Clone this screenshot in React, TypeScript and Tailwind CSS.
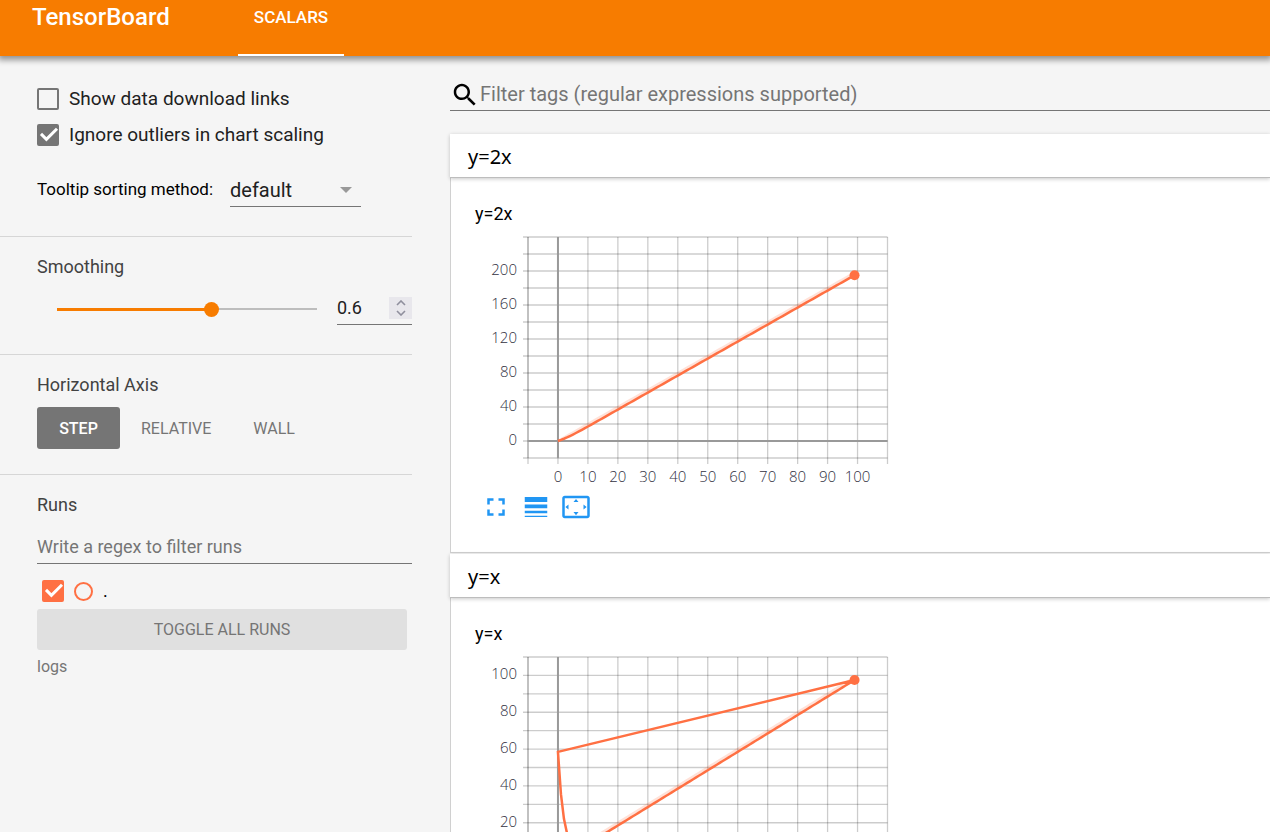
import { useState } from 'react';
import type { ReactNode } from 'react';

type Point = { x: number; y: number };

const SMOOTHING = 0.6;

function ramp(factor: number): Point[] {
  return Array.from({ length: 100 }, (_, i) => ({ x: i, y: i * factor }));
}

// Debiased exponential moving average.
function smooth(points: Point[], weight: number): Point[] {
  let last = 0;
  return points.map((p, i) => {
    last = last * weight + (1 - weight) * p.y;
    return { x: p.x, y: last / (1 - Math.pow(weight, i + 1)) };
  });
}

type ChartProps = {
  label: string;
  points: Point[];
  top: number;
  min: number;
  step: number;
};

const LEFT = 53;
const RIGHT = 412.5;
const GRID_TOP = 11;
const GRID_BOTTOM = 232;

function Chart({ label, points, top, min, step }: ChartProps) {
  const sx = (x: number) => LEFT + ((x + 10) / 120) * (RIGHT - LEFT);
  const sy = (y: number) => GRID_BOTTOM - ((y - min) / (top - min)) * (GRID_BOTTOM - GRID_TOP);
  const path = (list: Point[]) =>
    list.map((p, i) => `${i ? 'L' : 'M'}${sx(p.x).toFixed(2)} ${sy(p.y).toFixed(2)}`).join('');
  const smoothed = smooth(points, SMOOTHING);
  const end = smoothed[99];
  const xs = Array.from({ length: 13 }, (_, i) => -10 + i * 10);
  const ys: number[] = [];
  for (let v = Math.ceil(min / step) * step; v <= top; v += step) ys.push(v);

  return (
    <svg width="425" height="262" role="img" aria-label={label} className="block max-w-full">
      <g stroke="#000" strokeOpacity="0.2" strokeWidth="1.3">
        {xs.map((x) => (
          <line key={x} x1={sx(x)} x2={sx(x)} y1={GRID_TOP} y2={GRID_BOTTOM + 6} />
        ))}
        {ys.map((y) => (
          <line key={y} x1={LEFT - 5} x2={RIGHT} y1={sy(y)} y2={sy(y)} />
        ))}
        <line x1={LEFT} x2={LEFT} y1={GRID_TOP} y2={GRID_BOTTOM} />
      </g>
      <g stroke="#999" strokeWidth="2">
        <line x1={sx(0)} x2={sx(0)} y1={GRID_TOP} y2={GRID_BOTTOM} />
        <line x1={LEFT} x2={RIGHT} y1={sy(0)} y2={sy(0)} />
      </g>
      <path d={path(points)} fill="none" stroke="#ff7043" strokeOpacity="0.2" strokeWidth="2.5" />
      <path d={path(smoothed)} fill="none" stroke="#ff7043" strokeWidth="2.5" />
      <circle cx={sx(end.x)} cy={sy(end.y)} r="5" fill="#ff7043" />
      <g className="fill-[#32313f] font-['Open_Sans',sans-serif] text-[15px] font-light">
        {ys
          .filter((y) => y >= 0 && y % (step * 2) === 0 && y < top)
          .map((y) => (
            <text key={y} x={42} y={sy(y) + 4} textAnchor="end">
              {y}
            </text>
          ))}
        {xs.slice(1, 12).map((x) => (
          <text key={x} x={sx(x)} y={256} textAnchor="middle">
            {x}
          </text>
        ))}
      </g>
    </svg>
  );
}

const ICONS = {
  search:
    'M15.5 14h-.79l-.28-.27C15.41 12.59 16 11.11 16 9.5 16 5.91 13.09 3 9.5 3S3 5.91 3 9.5 5.91 16 9.5 16c1.61 0 3.09-.59 4.23-1.57l.27.28v.79l5 4.99L20.49 19l-4.99-5zm-6 0C7.01 14 5 11.99 5 9.5S7.01 5 9.5 5 14 7.01 14 9.5 11.99 14 9.5 14z',
  fullscreen:
    'M7 14H5v5h5v-2H7v-3zm-2-4h2V7h3V5H5v5zm12 7h-3v2h5v-5h-2v3zM14 5v2h3v3h2V5h-5z',
  lineWeight: 'M3 17h18v-2H3v2zm0 3h18v-1H3v1zm0-7h18v-3H3v3zm0-9v4h18V4H3z',
  fit: 'M12.01 5.5L10 8h4l-1.99-2.5zM18 10v4l2.5-1.99L18 10zM6 10l-2.5 2.01L6 14v-4zm8 6h-4l2.01 2.5L14 16zm7-13H3c-1.1 0-2 .9-2 2v14c0 1.1.9 2 2 2h18c1.1 0 2-.9 2-2V5c0-1.1-.9-2-2-2zm0 16.01H3V4.99h18v14.02z',
};

function Icon({ name }: { name: keyof typeof ICONS }) {
  return (
    <svg viewBox="0 0 24 24" className="size-[30px] shrink-0 fill-current" aria-hidden="true">
      <path d={ICONS[name]} />
    </svg>
  );
}

type CheckProps = { orange?: boolean; defaultChecked?: boolean; children: ReactNode };

function Check({ orange, defaultChecked, children }: CheckProps) {
  return (
    <label className="flex items-center gap-[10px]">
      <span className="grid size-[22px] shrink-0">
        <input
          type="checkbox"
          defaultChecked={defaultChecked}
          className={`peer col-start-1 row-start-1 size-[22px] appearance-none rounded-[2px] border-2 ${
            orange
              ? 'border-[#ff7043] checked:bg-[#ff7043]'
              : 'border-[#757575] checked:bg-[#757575]'
          }`}
        />
        <svg
          viewBox="0 0 22 22"
          className="pointer-events-none invisible col-start-1 row-start-1 size-[22px] peer-checked:visible"
          aria-hidden="true"
        >
          <path d="M4 9.9l5.4 5.4L20 4.7" fill="none" stroke="#fff" strokeWidth="3" />
        </svg>
      </span>
      {children}
    </label>
  );
}

function Panel({ title, children }: { title: string; children: ReactNode }) {
  return (
    <section>
      <button
        type="button"
        className="relative flex h-11 w-full items-center border-b border-[#bdbdbd] bg-white pt-0.5 pl-[18px] text-left font-['Noto_Sans',sans-serif] text-[20px] leading-6 text-black shadow-[0_1px_4px_rgba(0,0,0,0.22)]"
      >
        {title}
      </button>
      <div className="border-b border-l border-[#d0d0d0] bg-white pt-6 pb-[30px] pl-6">
        <h3 className="text-[18px] leading-6 text-black">{title}</h3>
        {children}
        <div className="mt-1 ml-[6px] flex gap-[10px] text-[#2196f3]">
          <button type="button" aria-label="Toggle chart size">
            <Icon name="fullscreen" />
          </button>
          <button type="button" aria-label="Toggle y-axis log scale">
            <Icon name="lineWeight" />
          </button>
          <button type="button" aria-label="Fit domain to data">
            <Icon name="fit" />
          </button>
        </div>
      </div>
    </section>
  );
}

const AXES = ['STEP', 'RELATIVE', 'WALL'];

export default function App() {
  const [axis, setAxis] = useState('STEP');
  return (
    <div className="flex h-screen flex-col bg-[#f5f5f5] font-[Roboto,sans-serif] text-[#212121]">
      <header className="relative z-10 flex h-14 shrink-0 bg-[#f77c00] text-white shadow-[0_2px_6px_2px_rgba(0,0,0,0.4)]">
        <h1 className="w-[238px] pl-8 text-[24px] leading-[34px] font-medium">TensorBoard</h1>
        <a
          href="#scalars"
          className="w-[106px] border-b-2 border-white text-center text-[17px] leading-[34px] font-medium"
        >
          SCALARS
        </a>
      </header>

      <div className="flex min-h-0 flex-1">
        <aside className="w-[412px] shrink-0 text-[18px]">
          <div className="border-b border-[#d6d6d6] pt-[25px] pb-[29px] pl-[37px]">
            <div className="flex h-9 items-center text-[19px]">
              <Check>Show data download links</Check>
            </div>
            <div className="flex h-9 items-center text-[19px]">
              <Check defaultChecked>Ignore outliers in chart scaling</Check>
            </div>
            <div className="mt-5 flex h-[34px] items-center">
              <label htmlFor="sorting" className="w-[193px] text-[17px] text-black">
                Tooltip sorting method:
              </label>
              <div className="grid h-full w-[131px] border-b border-[#757575]">
                <select
                  id="sorting"
                  className="col-start-1 row-start-1 appearance-none bg-transparent text-[20px]"
                >
                  <option>default</option>
                  <option>ascending</option>
                  <option>descending</option>
                  <option>nearest</option>
                </select>
                <svg
                  viewBox="0 0 12 6"
                  className="pointer-events-none col-start-1 row-start-1 mr-[9px] h-[6px] w-3 self-center justify-self-end fill-[#999]"
                  aria-hidden="true"
                >
                  <path d="M0 0h12L6 6z" />
                </svg>
              </div>
            </div>
          </div>

          <div className="border-b border-[#d6d6d6] pt-[18px] pb-[29px] pl-[37px]">
            <label htmlFor="smoothing" className="block leading-6 text-[#424242]">
              Smoothing
            </label>
            <div className="mt-3 flex h-[34px] items-center gap-5 pl-5">
              <input
                id="smoothing"
                type="range"
                min="0"
                max="1"
                step="0.1"
                defaultValue="0.6"
                className="mt-0.5 h-5 min-w-0 flex-1 appearance-none bg-transparent [&::-webkit-slider-runnable-track]:h-[3px] [&::-webkit-slider-runnable-track]:[background:linear-gradient(#f77c00,#f77c00)_0_0/60%_3px_no-repeat,linear-gradient(#bdbdbd,#bdbdbd)_0_0/100%_2px_no-repeat] [&::-webkit-slider-thumb]:mt-[-6px] [&::-webkit-slider-thumb]:size-[15px] [&::-webkit-slider-thumb]:appearance-none [&::-webkit-slider-thumb]:rounded-full [&::-webkit-slider-thumb]:bg-[#f77c00]"
              />
              <div className="flex h-full w-[75px] items-center border-b border-[#757575]">
                <input
                  type="number"
                  aria-label="Smoothing value"
                  defaultValue="0.6"
                  step="0.1"
                  className="min-w-0 flex-1 appearance-none bg-transparent [appearance:textfield] [&::-webkit-inner-spin-button]:appearance-none"
                />
                <div className="flex h-[22px] w-[23px] flex-col items-center justify-center gap-1 bg-[#e8e7ec] text-[#8f8f9d]">
                  <button type="button" aria-label="Increase">
                    <svg width="10" height="6" className="block" aria-hidden="true">
                      <path d="M1 5l4-4 4 4" fill="none" stroke="currentColor" strokeWidth="1.6" />
                    </svg>
                  </button>
                  <button type="button" aria-label="Decrease">
                    <svg width="10" height="6" className="block" aria-hidden="true">
                      <path d="M1 1l4 4 4-4" fill="none" stroke="currentColor" strokeWidth="1.6" />
                    </svg>
                  </button>
                </div>
              </div>
            </div>
          </div>

          <div className="border-b border-[#d6d6d6] pt-[18px] pb-[25px] pl-[37px]">
            <h2 className="leading-6 text-[#424242]">Horizontal Axis</h2>
            <div className="mt-[10px] flex h-[42px] text-[16px]">
              {AXES.map((name) => (
                <button
                  key={name}
                  type="button"
                  onClick={() => setAxis(name)}
                  className={
                    name === axis
                      ? 'min-w-[83px] rounded-[3px] bg-[#757575] px-[21px] pt-px font-medium text-white'
                      : 'px-[21px] pt-px text-[#757575]'
                  }
                >
                  {name}
                </button>
              ))}
            </div>
          </div>

          <div className="pt-[18px] pl-[37px]">
            <h2 className="leading-6 text-[#424242]">Runs</h2>
            <input
              type="text"
              aria-label="Filter runs"
              placeholder="Write a regex to filter runs"
              className="mt-[15px] block h-8 w-full border-b border-[#757575] bg-transparent pb-0.5 placeholder:text-[#757575]"
            />
            <div className="mt-4 ml-[5px] flex h-[22px] items-center text-black">
              <Check orange defaultChecked>
                <svg width="19" height="19" aria-hidden="true">
                  <circle cx="9.5" cy="9.5" r="8.5" fill="none" stroke="#ff7043" strokeWidth="2" />
                </svg>
                <span className="leading-5">.</span>
              </Check>
            </div>
            <button
              type="button"
              className="mt-[7px] block h-[41px] w-[370px] rounded-[3px] bg-[#e0e0e0] text-[16px] text-[#757575]"
            >
              TOGGLE ALL RUNS
            </button>
            <p className="mt-[5px] text-[16px] leading-6 text-[#757575]">logs</p>
          </div>
        </aside>

        <main className="min-w-0 flex-1 overflow-y-auto pt-[23px] pl-[38px] [scrollbar-width:none]">
          <label className="flex h-8 items-center border-b border-[#757575] text-black">
            <Icon name="search" />
            <input
              type="text"
              aria-label="Filter tags"
              placeholder="Filter tags (regular expressions supported)"
              className="h-full min-w-0 flex-1 bg-transparent pb-0.5 text-[20px] placeholder:text-[#757575]"
            />
          </label>
          <div className="mt-[23px] flex flex-col gap-px">
            <Panel title="y=2x">
              <Chart label="y=2x chart" points={ramp(2)} top={240} min={-20} step={20} />
            </Panel>
            <Panel title="y=x">
              <Chart
                label="y=x chart"
                points={[...ramp(1), ...ramp(1)]}
                top={110}
                min={-10}
                step={10}
              />
            </Panel>
          </div>
        </main>
      </div>
    </div>
  );
}
